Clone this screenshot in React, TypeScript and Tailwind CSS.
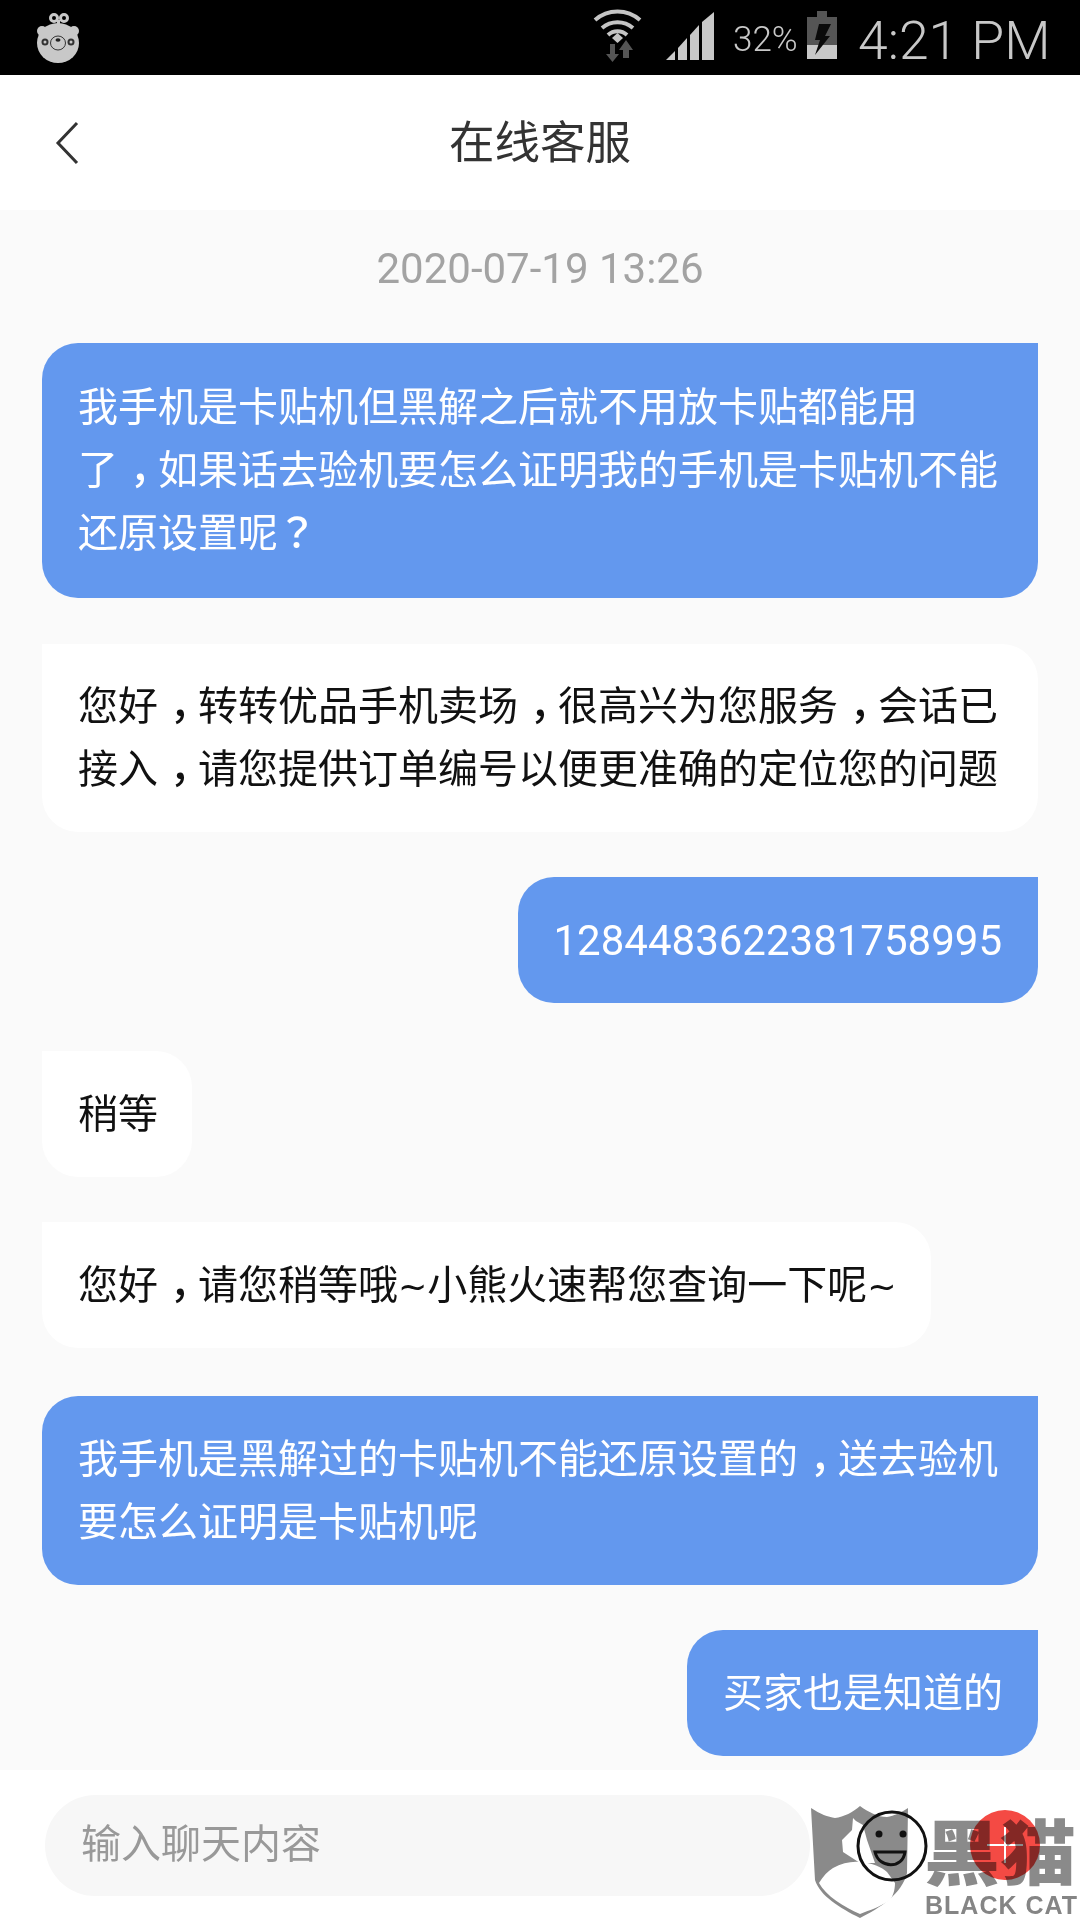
const cjk = "font-['Noto_Sans_CJK_SC','Noto_Sans',sans-serif]";

function Comma() {
  return (
    <span className="inline-block w-[40px] text-center leading-[40px] font-medium translate-x-[2px] translate-y-[11px] font-['Noto_Sans_CJK_TC',sans-serif]">
      ，
    </span>
  );
}

function Tilde() {
  return <span className="text-[35px] leading-none font-['DejaVu_Sans',sans-serif]">~</span>;
}

function Bubble({ me, children, cls }: { me?: boolean; children: React.ReactNode; cls: string }) {
  return (
    <div
      className={
        (me
          ? "self-end bg-[#6398ee] text-white rounded-l-[36px] rounded-br-[36px] "
          : "self-start bg-white text-[#111] rounded-r-[36px] rounded-bl-[36px] ") +
        "text-[40px] leading-[63px] whitespace-nowrap " +
        cls
      }
    >
      {children}
    </div>
  );
}

function Bear() {
  return (
    <svg width="44" height="52" viewBox="0 0 44 52" className="ml-[36px] mt-[12px]">
      <circle cx="18" cy="6" r="3.5" fill="none" stroke="#c8c8c8" strokeWidth="3" />
      <circle cx="28" cy="6" r="3.5" fill="none" stroke="#c8c8c8" strokeWidth="3" />
      <rect x="21" y="8" width="3" height="8" fill="#c8c8c8" />
      <circle cx="6" cy="19" r="5" fill="#c8c8c8" />
      <circle cx="38" cy="19" r="5" fill="#c8c8c8" />
      <ellipse cx="22" cy="31" rx="21" ry="20" fill="#c8c8c8" />
      <circle cx="9" cy="30" r="3.5" fill="#333" />
      <circle cx="9" cy="30" r="1.5" fill="#c8c8c8" />
      <circle cx="35" cy="30" r="3.5" fill="#333" />
      <circle cx="35" cy="30" r="1.5" fill="#c8c8c8" />
      <ellipse cx="22" cy="31" rx="7.5" ry="7" fill="none" stroke="#333" strokeWidth="1" />
      <ellipse cx="22" cy="28" rx="2.5" ry="1.8" fill="#222" />
    </svg>
  );
}

function StatusIcons() {
  return (
    <svg width="122" height="64" viewBox="0 0 122 64" className="absolute left-[592px] top-0">
      <g fill="none" stroke="#c4c4c4" strokeWidth="4">
        <path d="M3 20 A34 34 0 0 1 48 20" />
        <path d="M10 28 A24 24 0 0 1 41 28" />
        <path d="M16 35 A14 14 0 0 1 35 35" />
      </g>
      <path d="M20 38 L25.5 33 L31 38 L25.5 43 Z" fill="#c4c4c4" />
      <path d="M18 44 H23 V54 H27 L20.5 62 L14 54 H18 Z" fill="#555" />
      <path d="M34 40 L41 50 H37 V58 H31 V50 H27 Z" fill="#555" />
      <path d="M74 60 L83 51 V60 Z" fill="#c8c8c8" />
      <path d="M86 48 L95 38 V60 H86 Z" fill="#c8c8c8" />
      <path d="M98 35 L107 25 V60 H98 Z" fill="#c8c8c8" />
      <path d="M110 22 L122 12 V60 H110 Z" fill="#c8c8c8" />
    </svg>
  );
}

function Battery() {
  return (
    <svg width="30" height="48" viewBox="0 0 30 48" className="absolute left-[807px] top-[11px]">
      <rect x="10" y="0" width="10" height="6" fill="#555" />
      <rect x="0" y="6" width="30" height="28" fill="#555" />
      <rect x="0" y="34" width="30" height="14" fill="#c8c8c8" />
      <path d="M12 13 H24 L18 25 H23 L8 44 L13 29 H8 Z" fill="#0a0a0a" />
    </svg>
  );
}

function Watermark() {
  return (
    <div className="absolute left-0 top-0 w-[1080px] h-[1920px] pointer-events-none overflow-hidden">
      <div className="absolute left-[970px] top-[1810px] w-[70px] h-[70px] rounded-full bg-[#f44a44]" />
      <div className="absolute left-[1004px] top-[1827px] w-[2px] h-[36px] bg-white" />
      <div className="absolute left-[987px] top-[1844px] w-[36px] h-[2px] bg-white" />
      <svg width="100" height="114" viewBox="0 0 100 114" className="absolute left-[810px] top-[1806px]">
        <path
          fill="#8a8a8a"
          d="M1 2 C10 8 18 11 25 12 C34 11 43 6 50 0 C58 6 68 11 77 11 C84 10 92 6 98 2 L97 67 C92 88 70 102 50 112 C30 102 10 90 5 74 Z"
        />
        <path
          fill="#ffffff"
          d="M9 77 C13 70 18 65 23 62 C32 57 42 55 50 56 C62 57 72 61 77 66 L85 77 C85 84 83 90 80 94 C70 101 60 104 50 108 C34 101 16 90 9 77 Z"
        />
        <path fill="#ffffff" d="M43 12 L46 15 L53 19 L57 34 L65 57 L50 57 L33 46 L32 34 L42 24 Z" />
      </svg>
      <svg width="74" height="74" viewBox="0 0 74 74" className="absolute left-[855px] top-[1809px]">
        <circle cx="37" cy="37" r="34" fill="none" stroke="#111" strokeWidth="3" />
        <circle cx="24" cy="25" r="3.5" fill="#111" />
        <circle cx="48" cy="25" r="3.5" fill="#111" />
        <path d="M20 43 H50 C48 60 24 60 20 43 Z" fill="none" stroke="#111" strokeWidth="3" />
      </svg>
      <div className="absolute left-[924px] top-[1813px] text-[71px] leading-[70px] font-black text-[#8a8a8a] mix-blend-multiply scale-x-[1.07] origin-left whitespace-nowrap font-['Noto_Sans_CJK_SC',sans-serif]">
        黑猫
      </div>
      <div className="absolute left-[925px] top-[1892px] text-[25px] leading-[26px] font-bold tracking-[1px] text-[#858585] whitespace-nowrap font-['Liberation_Sans',sans-serif]">
        BLACK CAT
      </div>
    </div>
  );
}

export default function App() {
  return (
    <div className={"relative w-[1080px] h-[1920px] flex flex-col overflow-hidden bg-[#fafafa] " + cjk}>
      <div className="relative h-[75px] shrink-0 bg-black">
        <Bear />
        <StatusIcons />
        <span className="absolute left-[733px] top-[18px] text-[35px] leading-[44px] font-light text-[#c8c8c8] font-['Roboto',sans-serif]">
          32%
        </span>
        <Battery />
        <span className="absolute left-[858px] top-[10px] text-[53.5px] leading-[62px] font-light text-[#c8c8c8] whitespace-nowrap font-['Roboto',sans-serif]">
          4:21 PM
        </span>
      </div>

      <div className="h-[135px] shrink-0 bg-white flex items-center justify-center relative">
        <svg width="28" height="46" viewBox="0 0 28 46" className="absolute left-[53px] top-[45px]">
          <path d="M24 3 L5 23 L24 43" fill="none" stroke="#333" strokeWidth="3" />
        </svg>
        <span className="text-[45.5px] text-[#333] -translate-y-[3px]">在线客服</span>
      </div>

      <div className="flex-1 min-h-0 flex flex-col px-[42px]">
        <div className="self-center mt-[27px] mb-[43px] text-[42px] leading-[63px] text-[#a3a3a3] font-['Roboto',sans-serif]">
          2020-07-19 13:26
        </div>
        <Bubble me cls="w-[996px] pl-[36px] pt-[30px] pb-[36px]">
          我手机是卡贴机但黑解之后就不用放卡贴都能用
          <br />
          了<Comma />如果话去验机要怎么证明我的手机是卡贴机不能
          <br />
          还原设置呢
          <span className="inline-block w-[40px] text-center leading-[40px] font-medium -translate-x-[1px] font-['Noto_Sans_CJK_TC',sans-serif]">？</span>
        </Bubble>
        <Bubble cls="w-[996px] mt-[46px] pl-[36px] pt-[28px] pb-[34px]">
          您好<Comma />转转优品手机卖场<Comma />很高兴为您服务<Comma />会话已
          <br />
          接入<Comma />请您提供订单编号以便更准确的定位您的问题
        </Bubble>
        <Bubble me cls="mt-[45px] px-[36px] pt-[30px] pb-[33px]">
          <span className="leading-none font-['Roboto',sans-serif] text-[42px]">1284483622381758995</span>
        </Bubble>
        <Bubble cls="w-[150px] mt-[48px] pl-[36px] pt-[29px] pb-[34px]">稍等</Bubble>
        <Bubble cls="mt-[45px] pl-[36px] pr-[34px] pt-[29px] pb-[34px]">
          您好<Comma />请您稍等哦<Tilde />小熊火速帮您查询一下呢<Tilde />
        </Bubble>
        <Bubble me cls="w-[996px] mt-[48px] pl-[36px] pt-[29px] pb-[34px]">
          我手机是黑解过的卡贴机不能还原设置的<Comma />送去验机
          <br />
          要怎么证明是卡贴机呢
        </Bubble>
        <Bubble me cls="mt-[45px] pl-[36px] pr-[35px] pt-[29px] pb-[34px]">买家也是知道的</Bubble>
      </div>

      <div className="absolute left-0 bottom-0 w-full h-[150px] bg-white pl-[45px] pt-[25px]">
        <div className="w-[765px] h-[101px] rounded-full bg-[#f7f7f7] flex items-center pl-[36px] pb-[9px] text-[40px] text-[#999]">
          输入聊天内容
        </div>
      </div>

      <Watermark />
    </div>
  );
}
